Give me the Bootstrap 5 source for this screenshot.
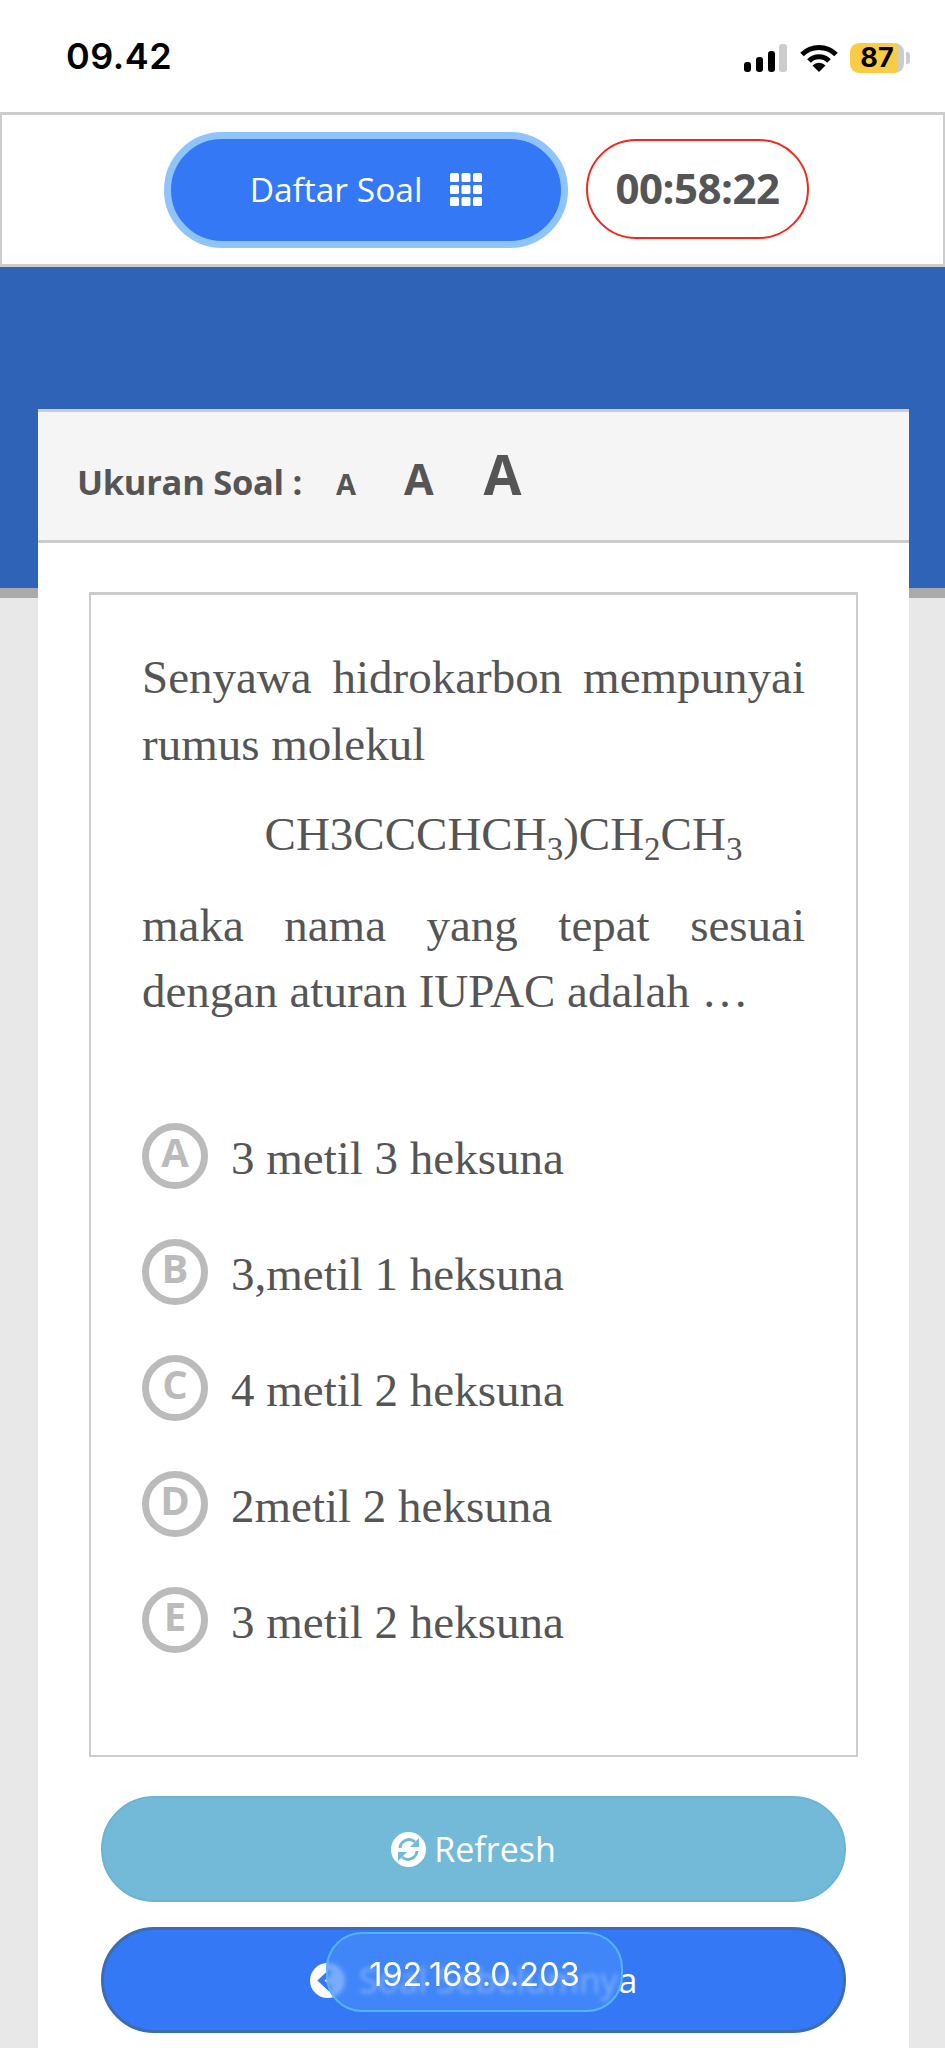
<!DOCTYPE html>
<html lang="id">
<head>
  <meta charset="UTF-8">
  <title>Ujian</title>
  <meta name="viewport" content="width=device-width, initial-scale=1">
  <link href="https://cdn.jsdelivr.net/npm/bootstrap@5.3.0/dist/css/bootstrap.min.css" rel="stylesheet">
  <style>
    html, body { height: 2048px; overflow: hidden; }
    body { background: #e8e8e8; font-family: "Open Sans", sans-serif; color: #555; position: relative; }

    .status-row { height: 112px; background: #fff; padding: 0 33px 0 66px; }
    .status-time { font-family: Inter, sans-serif; font-weight: 600; font-size: 36px; color: #000; margin-top: 0; letter-spacing: .5px; }
    .status-icons { margin-top: 4px; }
    .batt { width: 54px; height: 30px; border-radius: 9px; background: linear-gradient(90deg, #f9cc45 87%, #ccc 87%); color: #000; font: 700 27px/30px Inter, sans-serif; text-align: center; position: relative; }
    .batt::after { content: ""; position: absolute; left: 56px; top: 9px; width: 4px; height: 12px; background: #ccc; border-radius: 0 3px 3px 0; }

    .top-strip { height: 155px; background: #fff; border: solid #ccc; border-width: 3px 2px; padding-left: 28px; gap: 18px; }
    .list-btn { width: 404px; height: 116px; border: 7px solid #8fc4fa; background: #3478f6; color: #fff; font-size: 33.5px; border-radius: 58px; gap: 28px; }
    .list-btn:hover { background: #3478f6; color: #fff; border-color: #8fc4fa; }
    .timer-box { width: 223px; height: 100px; border: 2px solid #ee2a1e; border-radius: 50px; font-weight: 700; font-size: 42px; letter-spacing: -.5px; margin-top: -2px; padding-bottom: 3px; }

    .blue-band { height: 321px; background: #2f63b8; }
    .grey-line { height: 10px; background: #aaa; }

    .exam-card { position: absolute; top: 409px; left: 38px; width: 871px; height: 1700px; background: #fff; border: 0; border-radius: 0; color: #555; }
    .exam-head { height: 134px; background: #f5f5f5; border: solid #ccc; border-width: 3px 0; border-radius: 0 !important; padding: 34px 0 0 39px; font-weight: 700; }
    .size-label { font-size: 34.500px; margin-right: 34px; letter-spacing: -.3px; }
    .size-a { line-height: 1; }
    .size-s { font-size: 29px; margin-right: 48px; }
    .size-m { font-size: 43px; margin-right: 50px; }
    .size-l { font-size: 55px; }

    .exam-body { padding: 49px 51px 0; }
    .soal-box { height: 1165px; border: solid #ccc; border-width: 3px 2px 2px; padding: 49px 51px 0; font-family: "Liberation Serif", serif; font-size: 47px; line-height: 66.5px; }
    .soal-box p { margin: 0 0 24px; text-align: justify; }
    .soal-box p.formula { text-align: center; padding-left: 60px; }
    .soal-box sub { font-size: 33px; bottom: -.3em; }

    .pilihan { list-style: none; margin: 98px 0 0; padding: 0; }
    .pilihan li { height: 116px; display: flex; align-items: flex-start; gap: 23px; }
    .huruf { width: 66px; height: 66px; flex: none; border: 7px solid #bbb; border-radius: 50%; color: #bbb; font: 700 40px/44px "Open Sans", sans-serif; text-align: center; }
    .isi { margin-top: 2px; }

    .aksi { margin: 39px 12px 0; }
    .aksi-btn { height: 106px; width: 100%; border-radius: 53px; color: #fff; font-size: 34px; }
    .aksi-refresh { background: #73bad9; border: 2px solid #6db4d4; margin-bottom: 25px; }
    .aksi-prev { background: #3478f6; border: 3px solid #3c6cb4; font-size: 35px; gap: 14px; }
    .aksi-refresh:hover, .aksi-prev:hover { color: #fff; }
    .aksi-refresh:hover { background: #73bad9; }
    .aksi-prev:hover { background: #3478f6; }

    .ip-pill { position: absolute; left: 326px; top: 1932px; width: 297px; height: 80px; border-radius: 36px; border: 2px solid #55b4f5; background: rgba(70, 140, 250, .72); backdrop-filter: blur(2px); color: #fff; font: 400 32.500px/1 Inter, sans-serif; padding-top: 7px; }
  </style>
</head>
<body>

<div class="status-row d-flex justify-content-between align-items-center">
  <div class="status-time">09.42</div>
  <div class="status-icons d-flex align-items-center gap-2">
    <svg width="44" height="28" viewBox="0 0 44 28">
      <rect x="0" y="18" width="7" height="10" rx="3" fill="#000"/>
      <rect x="12" y="13" width="7" height="15" rx="3" fill="#000"/>
      <rect x="24" y="7" width="7" height="21" rx="3" fill="#000"/>
      <rect x="35" y="0" width="8" height="28" rx="3" fill="#ccc"/>
    </svg>
    <svg class="ms-1 me-1" width="38" height="28" viewBox="0 0 38 28">
      <path d="M2 10.5a24 24 0 0 1 34 0" fill="none" stroke="#000" stroke-width="5"/>
      <path d="M9 17a14 14 0 0 1 20 0" fill="none" stroke="#000" stroke-width="5"/>
      <path d="M12.5 21.5a9 9 0 0 1 13 0L19 28z" fill="#000"/>
    </svg>
    <div class="batt me-2">87</div>
  </div>
</div>

<div class="top-strip d-flex justify-content-center align-items-center">
  <button type="button" class="btn list-btn d-flex justify-content-center align-items-center">
    Daftar Soal
    <svg width="32" height="33" viewBox="0 0 32 33" fill="#fff">
      <rect x="0" y="0" width="9" height="9" rx="1.5"/><rect x="11.500" y="0" width="9" height="9" rx="1.5"/><rect x="23" y="0" width="9" height="9" rx="1.5"/>
      <rect x="0" y="12" width="9" height="9" rx="1.5"/><rect x="11.500" y="12" width="9" height="9" rx="1.5"/><rect x="23" y="12" width="9" height="9" rx="1.5"/>
      <rect x="0" y="24" width="9" height="9" rx="1.5"/><rect x="11.500" y="24" width="9" height="9" rx="1.5"/><rect x="23" y="24" width="9" height="9" rx="1.5"/>
    </svg>
  </button>
  <div class="timer-box d-flex justify-content-center align-items-center">00:58:22</div>
</div>

<div class="blue-band"></div>
<div class="grey-line"></div>

<div class="card exam-card">
  <div class="card-header exam-head d-flex align-items-baseline">
    <span class="size-label">Ukuran Soal :</span>
    <span class="size-a size-s">A</span>
    <span class="size-a size-m">A</span>
    <span class="size-a size-l">A</span>
  </div>
  <div class="exam-body">
    <div class="soal-box">
      <p>Senyawa hidrokarbon mempunyai rumus molekul</p>
      <p class="formula">CH3CCCHCH<sub>3</sub>)CH<sub>2</sub>CH<sub>3</sub></p>
      <p>maka nama yang tepat sesuai dengan aturan IUPAC adalah …</p>
      <ul class="pilihan">
        <li><span class="huruf">A</span><span class="isi">3 metil 3 heksuna</span></li>
        <li><span class="huruf">B</span><span class="isi">3,metil 1 heksuna</span></li>
        <li><span class="huruf">C</span><span class="isi">4 metil 2 heksuna</span></li>
        <li><span class="huruf">D</span><span class="isi">2metil 2 heksuna</span></li>
        <li><span class="huruf">E</span><span class="isi">3 metil 2 heksuna</span></li>
      </ul>
    </div>
    <div class="aksi">
      <button type="button" class="btn aksi-btn aksi-refresh d-flex justify-content-center align-items-center gap-2">
        <svg width="35" height="35" viewBox="0 0 35 35">
          <circle cx="17.500" cy="17.500" r="17.500" fill="#fff"/>
          <path d="M9 16a9 9 0 0 1 15-6" fill="none" stroke="#73bad9" stroke-width="3"/>
          <path d="M28 6v9h-9z" fill="#73bad9"/>
          <path d="M26 19a9 9 0 0 1-15 6" fill="none" stroke="#73bad9" stroke-width="3"/>
          <path d="M7 29v-9h9z" fill="#73bad9"/>
        </svg>
        Refresh
      </button>
      <button type="button" class="btn aksi-btn aksi-prev d-flex justify-content-center align-items-center">
        <svg width="35" height="35" viewBox="0 0 35 35">
          <circle cx="17.500" cy="17.500" r="17.500" fill="#fff"/>
          <path d="M21 8l-10 9.500 10 9.500" fill="none" stroke="#3478f6" stroke-width="5"/>
        </svg>
        Soal Sebelumnya
      </button>
    </div>
  </div>
</div>

<div class="ip-pill d-flex justify-content-center align-items-center">192.168.0.203</div>

<script src="https://cdn.jsdelivr.net/npm/bootstrap@5.3.0/dist/js/bootstrap.bundle.min.js"></script>
</body>
</html>
